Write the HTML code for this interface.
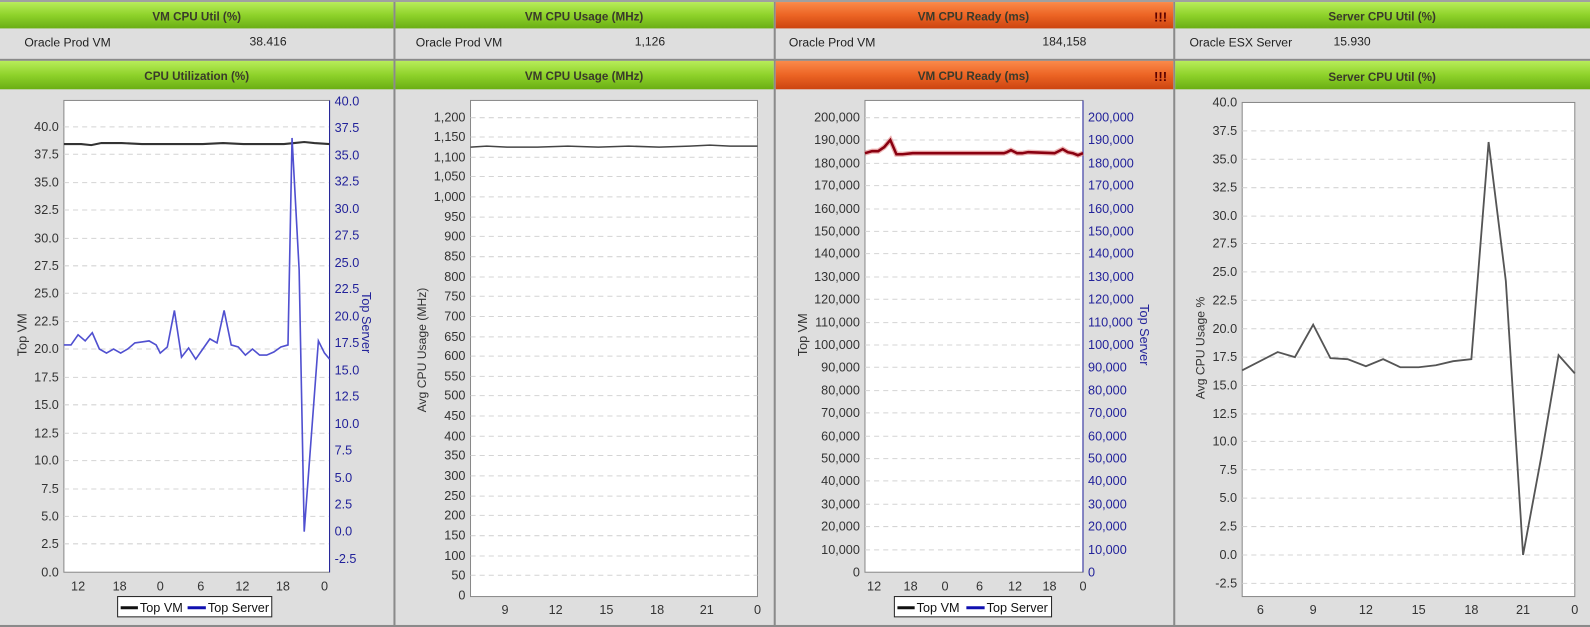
<!DOCTYPE html>
<html><head><meta charset="utf-8"><style>
html,body{margin:0;padding:0;background:#dcdcdc;}
svg{display:block;font-family:"Liberation Sans","DejaVu Sans",sans-serif;}
.h{font-weight:bold;font-size:11.5px;fill:#3a3a2a;text-anchor:middle;}
.v{font-size:12px;fill:#222;}
.l{font-size:12.5px;fill:#333;text-anchor:end;}
.r{font-size:12.5px;fill:#22229a;}
.x{font-size:12.5px;fill:#333;text-anchor:middle;}
.g{stroke:#d4d4d4;stroke-dasharray:5,4;stroke-width:1;}
.ex{font-weight:bold;font-size:13px;fill:#5a0000;}
</style></head><body>
<svg width="1590" height="627" viewBox="0 0 1568 618" preserveAspectRatio="none" xmlns="http://www.w3.org/2000/svg">
<defs>
<linearGradient id="gr" x1="0" y1="0" x2="0" y2="1"><stop offset="0" stop-color="#b8ec5a"/><stop offset="0.5" stop-color="#8ed22a"/><stop offset="1" stop-color="#6aae14"/></linearGradient>
<linearGradient id="or" x1="0" y1="0" x2="0" y2="1"><stop offset="0" stop-color="#fb8a4a"/><stop offset="0.5" stop-color="#ec6424"/><stop offset="1" stop-color="#cc4410"/></linearGradient>
</defs>
<rect width="1568" height="618" fill="#dedede"/>
<!-- panel separators -->
<g fill="#8a8a8a"><rect x="388" y="0" width="2" height="618"/><rect x="763" y="0" width="2" height="618"/><rect x="1157" y="0" width="2" height="618"/><rect x="0" y="616" width="1568" height="2"/><rect x="0" y="58" width="1568" height="2"/><rect x="0" y="0" width="1568" height="2" fill="#a0a0a0"/></g>
<!-- headers -->
<rect x="0" y="2" width="388" height="26" fill="url(#gr)"/><rect x="390" y="2" width="373" height="26" fill="url(#gr)"/><rect x="765" y="2" width="392" height="26" fill="url(#or)"/><rect x="1159" y="2" width="409" height="26" fill="url(#gr)"/>
<rect x="0" y="60" width="388" height="28" fill="url(#gr)"/><rect x="390" y="60" width="373" height="28" fill="url(#gr)"/><rect x="765" y="60" width="392" height="28" fill="url(#or)"/><rect x="1159" y="60" width="409" height="28" fill="url(#gr)"/>
<text class="h" x="194" y="20">VM CPU Util (%)</text><text class="h" x="576" y="20">VM CPU Usage (MHz)</text><text class="h" x="960" y="20">VM CPU Ready (ms)</text><text class="h" x="1363" y="20">Server CPU Util (%)</text>
<text class="ex" x="1138" y="21">!!!</text><text class="ex" x="1138" y="80">!!!</text>
<text class="h" x="194" y="79">CPU Utilization (%)</text><text class="h" x="576" y="79">VM CPU Usage (MHz)</text><text class="h" x="960" y="79">VM CPU Ready (ms)</text><text class="h" x="1363" y="80">Server CPU Util (%)</text>
<!-- value row -->
<text class="v" x="24" y="46">Oracle Prod VM</text><text class="v" x="246" y="45">38.416</text>
<text class="v" x="410" y="46">Oracle Prod VM</text><text class="v" x="626" y="45">1,126</text>
<text class="v" x="778" y="46">Oracle Prod VM</text><text class="v" x="1028" y="45">184,158</text>
<text class="v" x="1173" y="46">Oracle ESX Server</text><text class="v" x="1315" y="45">15.930</text>

<!-- PANEL 1 -->
<rect x="63" y="99" width="262" height="465" fill="#fff" stroke="#888"/>
<g class="g"><line x1="63" x2="325" y1="125" y2="125"/><line x1="63" x2="325" y1="152" y2="152"/><line x1="63" x2="325" y1="180" y2="180"/><line x1="63" x2="325" y1="207" y2="207"/><line x1="63" x2="325" y1="235" y2="235"/><line x1="63" x2="325" y1="262" y2="262"/><line x1="63" x2="325" y1="289" y2="289"/><line x1="63" x2="325" y1="317" y2="317"/><line x1="63" x2="325" y1="344" y2="344"/><line x1="63" x2="325" y1="372" y2="372"/><line x1="63" x2="325" y1="399" y2="399"/><line x1="63" x2="325" y1="427" y2="427"/><line x1="63" x2="325" y1="454" y2="454"/><line x1="63" x2="325" y1="482" y2="482"/><line x1="63" x2="325" y1="509" y2="509"/><line x1="63" x2="325" y1="536" y2="536"/></g>
<g class="l"><text x="58" y="129">40.0</text><text x="58" y="156">37.5</text><text x="58" y="184">35.0</text><text x="58" y="211">32.5</text><text x="58" y="239">30.0</text><text x="58" y="266">27.5</text><text x="58" y="293">25.0</text><text x="58" y="321">22.5</text><text x="58" y="348">20.0</text><text x="58" y="376">17.5</text><text x="58" y="403">15.0</text><text x="58" y="431">12.5</text><text x="58" y="458">10.0</text><text x="58" y="486">7.5</text><text x="58" y="513">5.0</text><text x="58" y="540">2.5</text><text x="58" y="568">0.0</text></g>
<line x1="325" y1="99" x2="325" y2="564" stroke="#22229a"/>
<g class="r"><text x="330" y="104">40.0</text><text x="330" y="130">37.5</text><text x="330" y="157">35.0</text><text x="330" y="183">32.5</text><text x="330" y="210">30.0</text><text x="330" y="236">27.5</text><text x="330" y="263">25.0</text><text x="330" y="289">22.5</text><text x="330" y="316">20.0</text><text x="330" y="342">17.5</text><text x="330" y="369">15.0</text><text x="330" y="395">12.5</text><text x="330" y="422">10.0</text><text x="330" y="448">7.5</text><text x="330" y="475">5.0</text><text x="330" y="501">2.5</text><text x="330" y="528">0.0</text><text x="330" y="555">-2.5</text></g>
<g class="x"><text x="77" y="582">12</text><text x="118" y="582">18</text><text x="158" y="582">0</text><text x="198" y="582">6</text><text x="239" y="582">12</text><text x="279" y="582">18</text><text x="320" y="582">0</text></g>
<text transform="translate(26,330) rotate(-90)" style="font-size:12.5px;fill:#333;text-anchor:middle">Top VM</text>
<text transform="translate(357,318) rotate(90)" style="font-size:12.5px;fill:#22229a;text-anchor:middle">Top Server</text>
<polyline fill="none" stroke="#333" stroke-width="2" points="63,142 80,142 90,143 100,141 120,141 140,142 160,142 180,142 200,142 220,141 240,142 260,142 280,142 290,141 300,140 310,141 325,142"/>
<polyline fill="none" stroke="#5050d0" stroke-width="1.6" points="63,340 70,340 77,330 84,336 91,328 98,344 105,348 112,344 119,348 126,344 133,338 140,337 147,336 154,340 158,348 165,342 172,306 179,352 186,343 193,354 200,344 207,334 214,338 221,306 228,340 235,342 242,350 249,344 256,350 263,350 270,347 277,342 284,340 288,136 295,266 300,524 307,430 314,336 320,348 325,354"/>
<rect x="116" y="588" width="152" height="20" fill="#fff" stroke="#222"/>
<line x1="119" y1="599" x2="136" y2="599" stroke="#111" stroke-width="3"/><text x="138" y="603" style="font-size:12.5px;fill:#111">Top VM</text>
<line x1="185" y1="599" x2="203" y2="599" stroke="#1010b0" stroke-width="3"/><text x="205" y="603" style="font-size:12.5px;fill:#111">Top Server</text>

<!-- PANEL 2 -->
<rect x="464" y="99" width="283" height="489" fill="#fff" stroke="#888"/>
<g class="g">
<line x1="464" x2="747" y1="116" y2="116"/><line x1="464" x2="747" y1="135" y2="135"/><line x1="464" x2="747" y1="155" y2="155"/><line x1="464" x2="747" y1="174" y2="174"/><line x1="464" x2="747" y1="194" y2="194"/><line x1="464" x2="747" y1="214" y2="214"/><line x1="464" x2="747" y1="233" y2="233"/><line x1="464" x2="747" y1="253" y2="253"/><line x1="464" x2="747" y1="273" y2="273"/><line x1="464" x2="747" y1="292" y2="292"/><line x1="464" x2="747" y1="312" y2="312"/><line x1="464" x2="747" y1="332" y2="332"/><line x1="464" x2="747" y1="351" y2="351"/><line x1="464" x2="747" y1="371" y2="371"/><line x1="464" x2="747" y1="390" y2="390"/><line x1="464" x2="747" y1="410" y2="410"/><line x1="464" x2="747" y1="430" y2="430"/><line x1="464" x2="747" y1="449" y2="449"/><line x1="464" x2="747" y1="469" y2="469"/><line x1="464" x2="747" y1="489" y2="489"/><line x1="464" x2="747" y1="508" y2="508"/><line x1="464" x2="747" y1="528" y2="528"/><line x1="464" x2="747" y1="548" y2="548"/><line x1="464" x2="747" y1="567" y2="567"/></g>
<g class="l"><text x="459" y="120">1,200</text><text x="459" y="139">1,150</text><text x="459" y="159">1,100</text><text x="459" y="178">1,050</text><text x="459" y="198">1,000</text><text x="459" y="218">950</text><text x="459" y="237">900</text><text x="459" y="257">850</text><text x="459" y="277">800</text><text x="459" y="296">750</text><text x="459" y="316">700</text><text x="459" y="336">650</text><text x="459" y="355">600</text><text x="459" y="375">550</text><text x="459" y="394">500</text><text x="459" y="414">450</text><text x="459" y="434">400</text><text x="459" y="453">350</text><text x="459" y="473">300</text><text x="459" y="493">250</text><text x="459" y="512">200</text><text x="459" y="532">150</text><text x="459" y="552">100</text><text x="459" y="571">50</text><text x="459" y="591">0</text></g>
<g class="x"><text x="498" y="605">9</text><text x="548" y="605">12</text><text x="598" y="605">15</text><text x="648" y="605">18</text><text x="697" y="605">21</text><text x="747" y="605">0</text></g>
<text transform="translate(420,345) rotate(-90)" style="font-size:12px;fill:#333;text-anchor:middle">Avg CPU Usage (MHz)</text>
<polyline fill="none" stroke="#444" stroke-width="1.5" points="464,145 480,144 500,145 530,145 560,144 590,145 620,144 650,145 680,144 700,143 720,144 747,144"/>

<!-- PANEL 3 -->
<rect x="853" y="99" width="215" height="465" fill="#fff" stroke="#888"/>
<g class="g"><line x1="853" x2="1068" y1="116" y2="116"/><line x1="853" x2="1068" y1="138" y2="138"/><line x1="853" x2="1068" y1="161" y2="161"/><line x1="853" x2="1068" y1="183" y2="183"/><line x1="853" x2="1068" y1="206" y2="206"/><line x1="853" x2="1068" y1="228" y2="228"/><line x1="853" x2="1068" y1="250" y2="250"/><line x1="853" x2="1068" y1="273" y2="273"/><line x1="853" x2="1068" y1="295" y2="295"/><line x1="853" x2="1068" y1="318" y2="318"/><line x1="853" x2="1068" y1="340" y2="340"/><line x1="853" x2="1068" y1="362" y2="362"/><line x1="853" x2="1068" y1="385" y2="385"/><line x1="853" x2="1068" y1="407" y2="407"/><line x1="853" x2="1068" y1="430" y2="430"/><line x1="853" x2="1068" y1="452" y2="452"/><line x1="853" x2="1068" y1="474" y2="474"/><line x1="853" x2="1068" y1="497" y2="497"/><line x1="853" x2="1068" y1="519" y2="519"/><line x1="853" x2="1068" y1="542" y2="542"/></g>
<g class="l"><text x="848" y="120">200,000</text><text x="848" y="142">190,000</text><text x="848" y="165">180,000</text><text x="848" y="187">170,000</text><text x="848" y="210">160,000</text><text x="848" y="232">150,000</text><text x="848" y="254">140,000</text><text x="848" y="277">130,000</text><text x="848" y="299">120,000</text><text x="848" y="322">110,000</text><text x="848" y="344">100,000</text><text x="848" y="366">90,000</text><text x="848" y="389">80,000</text><text x="848" y="411">70,000</text><text x="848" y="434">60,000</text><text x="848" y="456">50,000</text><text x="848" y="478">40,000</text><text x="848" y="501">30,000</text><text x="848" y="523">20,000</text><text x="848" y="546">10,000</text><text x="848" y="568">0</text></g>
<line x1="1068" y1="99" x2="1068" y2="564" stroke="#22229a"/>
<g class="r"><text x="1073" y="120">200,000</text><text x="1073" y="142">190,000</text><text x="1073" y="165">180,000</text><text x="1073" y="187">170,000</text><text x="1073" y="210">160,000</text><text x="1073" y="232">150,000</text><text x="1073" y="254">140,000</text><text x="1073" y="277">130,000</text><text x="1073" y="299">120,000</text><text x="1073" y="322">110,000</text><text x="1073" y="344">100,000</text><text x="1073" y="366">90,000</text><text x="1073" y="389">80,000</text><text x="1073" y="411">70,000</text><text x="1073" y="434">60,000</text><text x="1073" y="456">50,000</text><text x="1073" y="478">40,000</text><text x="1073" y="501">30,000</text><text x="1073" y="523">20,000</text><text x="1073" y="546">10,000</text><text x="1073" y="568">0</text></g>
<g class="x"><text x="862" y="582">12</text><text x="898" y="582">18</text><text x="932" y="582">0</text><text x="966" y="582">6</text><text x="1001" y="582">12</text><text x="1035" y="582">18</text><text x="1068" y="582">0</text></g>
<text transform="translate(796,330) rotate(-90)" style="font-size:12.5px;fill:#333;text-anchor:middle">Top VM</text>
<text transform="translate(1124,330) rotate(90)" style="font-size:12.5px;fill:#22229a;text-anchor:middle">Top Server</text>
<polyline fill="none" stroke="#e08080" stroke-width="5" opacity="0.6" points="853,151 860,149 866,149 872,145 878,138 884,152 890,152 900,151 940,151 990,151 993,150 997,148 1003,151 1008,151 1014,150 1040,151 1048,147 1053,150 1058,151 1063,153 1068,151"/>
<polyline fill="none" stroke="#8a0010" stroke-width="2.5" points="853,151 860,149 866,149 872,145 878,138 884,152 890,152 900,151 940,151 990,151 993,150 997,148 1003,151 1008,151 1014,150 1040,151 1048,147 1053,150 1058,151 1063,153 1068,151"/>
<rect x="882" y="588" width="155" height="20" fill="#fff" stroke="#222"/>
<line x1="885" y1="599" x2="902" y2="599" stroke="#111" stroke-width="3"/><text x="904" y="603" style="font-size:12.5px;fill:#111">Top VM</text>
<line x1="953" y1="599" x2="971" y2="599" stroke="#1010b0" stroke-width="3"/><text x="973" y="603" style="font-size:12.5px;fill:#111">Top Server</text>

<!-- PANEL 4 -->
<rect x="1225" y="101" width="328" height="487" fill="#fff" stroke="#888"/>
<g class="g"><line x1="1225" x2="1553" y1="129" y2="129"/><line x1="1225" x2="1553" y1="157" y2="157"/><line x1="1225" x2="1553" y1="185" y2="185"/><line x1="1225" x2="1553" y1="213" y2="213"/><line x1="1225" x2="1553" y1="240" y2="240"/><line x1="1225" x2="1553" y1="268" y2="268"/><line x1="1225" x2="1553" y1="296" y2="296"/><line x1="1225" x2="1553" y1="324" y2="324"/><line x1="1225" x2="1553" y1="352" y2="352"/><line x1="1225" x2="1553" y1="380" y2="380"/><line x1="1225" x2="1553" y1="408" y2="408"/><line x1="1225" x2="1553" y1="435" y2="435"/><line x1="1225" x2="1553" y1="463" y2="463"/><line x1="1225" x2="1553" y1="491" y2="491"/><line x1="1225" x2="1553" y1="519" y2="519"/><line x1="1225" x2="1553" y1="547" y2="547"/><line x1="1225" x2="1553" y1="575" y2="575"/></g>
<g class="l"><text x="1220" y="105">40.0</text><text x="1220" y="133">37.5</text><text x="1220" y="161">35.0</text><text x="1220" y="189">32.5</text><text x="1220" y="217">30.0</text><text x="1220" y="244">27.5</text><text x="1220" y="272">25.0</text><text x="1220" y="300">22.5</text><text x="1220" y="328">20.0</text><text x="1220" y="356">17.5</text><text x="1220" y="384">15.0</text><text x="1220" y="412">12.5</text><text x="1220" y="439">10.0</text><text x="1220" y="467">7.5</text><text x="1220" y="495">5.0</text><text x="1220" y="523">2.5</text><text x="1220" y="551">0.0</text><text x="1220" y="579">-2.5</text></g>
<g class="x"><text x="1243" y="605">6</text><text x="1295" y="605">9</text><text x="1347" y="605">12</text><text x="1399" y="605">15</text><text x="1451" y="605">18</text><text x="1502" y="605">21</text><text x="1553" y="605">0</text></g>
<text transform="translate(1188,343) rotate(-90)" style="font-size:12px;fill:#333;text-anchor:middle">Avg CPU Usage %</text>
<polyline fill="none" stroke="#555" stroke-width="1.8" points="1225,365 1260,347 1277,352 1295,320 1312,353 1329,354 1347,361 1364,354 1381,362 1399,362 1416,360 1433,356 1451,354 1468,140 1485,277 1502,547 1520,450 1537,350 1553,368"/>
</svg>
</body></html>
